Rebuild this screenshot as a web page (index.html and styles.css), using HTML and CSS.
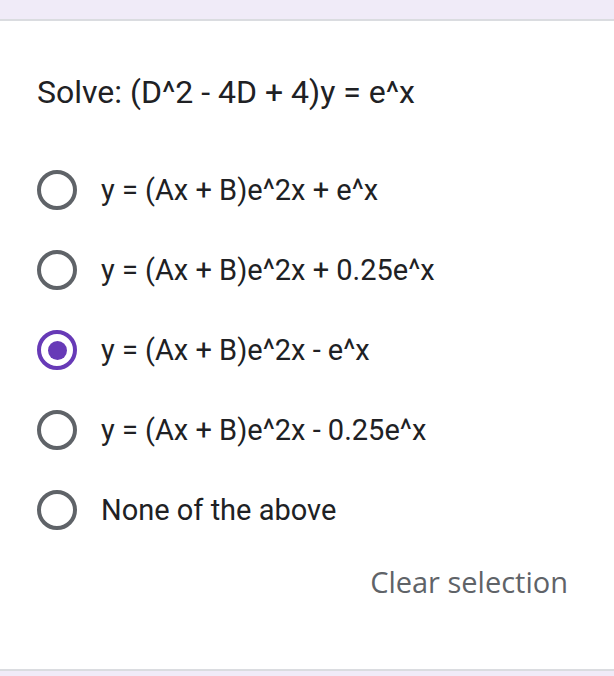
FILE: index.html
```html
<!DOCTYPE html>
<html lang="en">
<head>
    <meta charset="UTF-8">
    <meta name="viewport" content="width=device-width, initial-scale=1.0">
    <title>Quiz question</title>
    <link rel="stylesheet" href="styles.css">
</head>
<body>
    <div class="card">
        <div class="question">Solve: (D^2 - 4D + 4)y = e^x</div>

        <div class="options">
            <label class="option">
                <span class="radio"></span>
                <span class="option-text">y = (Ax + B)e^2x + e^x</span>
            </label>
            <label class="option">
                <span class="radio"></span>
                <span class="option-text">y = (Ax + B)e^2x + 0.25e^x</span>
            </label>
            <label class="option">
                <span class="radio checked"></span>
                <span class="option-text">y = (Ax + B)e^2x - e^x</span>
            </label>
            <label class="option">
                <span class="radio"></span>
                <span class="option-text">y = (Ax + B)e^2x - 0.25e^x</span>
            </label>
            <label class="option">
                <span class="radio"></span>
                <span class="option-text">None of the above</span>
            </label>
        </div>

        <div class="actions">
            <button class="clear-btn">Clear selection</button>
        </div>
    </div>
</body>
</html>
```

FILE: styles.css
```css
body {
    margin: 0;
    background-color: #f0ebf8;
    font-family: Roboto, 'Liberation Sans', sans-serif;
    color: #202124;
}
.card {
    margin-top: 19px;
    height: 648px;
    background-color: #ffffff;
    border-top: 2px solid #dadce0;
    border-bottom: 2px solid #dadce0;
    box-sizing: content-box;
    padding: 0 37px;
}
.question {
    font-size: 32px;
    line-height: 36px;
    padding-top: 53px;
    height: 76px;
}
.options {
    display: flex;
    flex-direction: column;
}
.option {
    display: flex;
    align-items: center;
    height: 80px;
    gap: 24px;
}
.radio {
    width: 32px;
    height: 32px;
    border: 4px solid #5f6368;
    border-radius: 50%;
    position: relative;
    flex-shrink: 0;
}
.radio.checked {
    border-color: #673ab7;
}
.radio.checked:after {
    content: "";
    position: absolute;
    top: 6.5px;
    left: 6.5px;
    width: 19px;
    height: 19px;
    border-radius: 50%;
    background-color: #673ab7;
}
.option-text {
    font-size: 29px;
    line-height: 36px;
}
.actions {
    display: flex;
    justify-content: flex-end;
    padding-right: 9px;
    margin-top: 14px;
}
.clear-btn {
    background: none;
    border: none;
    padding: 0;
    font-family: 'Open Sans', sans-serif;
    font-weight: 500;
    font-size: 29px;
    line-height: 36px;
    color: #5f6368;
    cursor: pointer;
}
```
